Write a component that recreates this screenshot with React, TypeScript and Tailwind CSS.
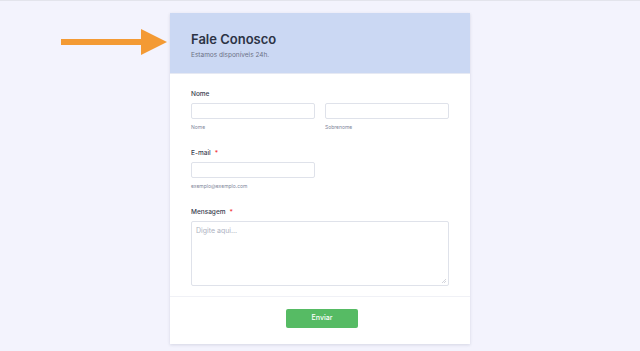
import React from "react";

const font = { fontFamily: 'Inter, "Noto Sans", sans-serif' };

function Label({ children, required }: { children: React.ReactNode; required?: boolean }) {
  return (
    <div className="text-[6.5px] leading-[8px] font-medium text-[#3a4050] flex items-center">
      <span>{children}</span>
      {required && <span className="text-[#f23a3c] ml-[4px]">*</span>}
    </div>
  );
}

function Sub({ children }: { children: React.ReactNode }) {
  return <div className="text-[5px] leading-[7px] text-[#80869a] mt-[5px]">{children}</div>;
}

export default function App() {
  return (
    <div
      className="relative min-h-[351px] bg-[#f3f3fd] border-t border-[#e3e4ec] pt-[12px] pb-[8px]"
      style={font}
    >
      <svg className="absolute left-[60px] top-[27px]" width="110" height="28" viewBox="60 27 110 28">
        <rect x="61" y="38" width="82" height="6" fill="#f39a34" />
        <polygon points="141,28 167,41 141,54" fill="#f39a34" />
      </svg>
      <div className="w-[300px] mx-auto bg-white shadow-[0_1px_3px_rgba(40,50,80,0.15)]">
        <div className="bg-[#cbd8f3] h-[61px] px-[21px] pt-[18px] border-b border-[#e6e9f3]">
          <div className="text-[13px] leading-[16px] font-semibold text-[#2c3345]">Fale Conosco</div>
          <div className="text-[6.5px] leading-[8px] text-[#6b7185] mt-[3.5px]">Estamos disponíveis 24h.</div>
        </div>
        <div className="px-[21px] pt-[16px]">
          <div>
            <Label>Nome</Label>
            <div className="grid grid-cols-2 gap-[10px] mt-[5px]">
              <div>
                <div className="h-[16px] border border-[#dfe2ea] rounded-[2px] bg-white" />
                <Sub>Nome</Sub>
              </div>
              <div>
                <div className="h-[16px] border border-[#dfe2ea] rounded-[2px] bg-white" />
                <Sub>Sobrenome</Sub>
              </div>
            </div>
          </div>
          <div className="mt-[18px]">
            <Label required>E-mail</Label>
            <div className="w-[124px] mt-[5px]">
              <div className="h-[16px] border border-[#dfe2ea] rounded-[2px] bg-white" />
              <Sub>exemplo@exemplo.com</Sub>
            </div>
          </div>
          <div className="mt-[18px]">
            <Label required>Mensagem</Label>
            <div className="mt-[5px] relative h-[65px] border border-[#dfe2ea] rounded-[2px] bg-white">
              <div className="absolute left-[4px] top-[5px] text-[7px] leading-[8px] text-[#aeb2bf]">Digite aqui...</div>
              <svg className="absolute right-[2px] bottom-[2px]" width="4" height="4" viewBox="0 0 4 4">
                <path d="M4 0L0 4M4 2L2 4" stroke="#b5b8c4" strokeWidth="0.6" />
              </svg>
            </div>
          </div>
        </div>
        <div className="mt-[10px] border-t border-[#f0f1f6] flex justify-center pt-[12px] pb-[16px] pl-[4px]">
          <div className="w-[72px] h-[19px] bg-[#56bb64] rounded-[2px] flex items-center justify-center text-white text-[7px] font-medium">
            Enviar
          </div>
        </div>
      </div>
    </div>
  );
}
